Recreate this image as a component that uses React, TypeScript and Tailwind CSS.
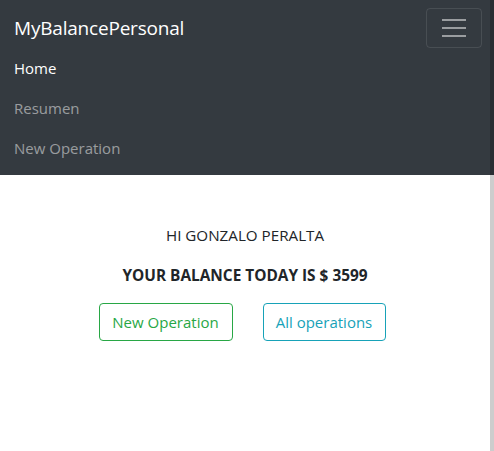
import React from "react";

export default function App() {
  return (
    <div
      className="flex h-[451px] w-full bg-white overflow-hidden"
      style={{ fontFamily: '"Open Sans", "Noto Sans", sans-serif' }}
    >
      <div className="flex-1 flex flex-col">
        <nav className="bg-[#343a40] px-[14px] pt-[8px] pb-[7px]">
          <div className="flex items-center justify-between">
            <span className="text-white text-[19px] leading-[30px] pt-[5px] pb-[5px] tracking-[-0.2px]">
              MyBalancePersonal
            </span>
            <button className="w-[56px] h-[40px] mt-[-1px] rounded-[4px] border border-white/10 flex flex-col items-center justify-center gap-[6px] mr-[-6px]">
              <span className="block w-[24px] h-[2px] bg-white/50" />
              <span className="block w-[24px] h-[2px] bg-white/50" />
              <span className="block w-[24px] h-[2px] bg-white/50" />
            </button>
          </div>
          <ul className="flex flex-col text-[15px]">
            <li className="py-[8px] leading-[24px] text-white">Home</li>
            <li className="py-[8px] leading-[24px] text-white/50">Resumen</li>
            <li className="py-[8px] leading-[24px] text-white/50">New Operation</li>
          </ul>
        </nav>
        <main className="flex flex-col items-center pt-[48px] text-[#212529]">
          <p className="text-[15.2px] leading-[24px]">HI GONZALO PERALTA</p>
          <p className="text-[15.4px] leading-[24px] font-bold mt-[17px]">
            YOUR BALANCE TODAY IS $ 3599
          </p>
          <div className="flex gap-[30px] mt-[15px] mr-[6px]">
            <button className="h-[38px] w-[134px] rounded-[4px] border border-[#28a745] text-[#28a745] text-[15px]">
              New Operation
            </button>
            <button className="h-[38px] w-[123px] rounded-[4px] border border-[#17a2b8] text-[#17a2b8] text-[15px]">
              All operations
            </button>
          </div>
        </main>
      </div>
      <div className="w-[4px] flex flex-col">
        <div className="h-[175px] bg-[#2a2e33]" />
        <div className="flex-1 bg-[#cdcdcd]" />
      </div>
    </div>
  );
}
